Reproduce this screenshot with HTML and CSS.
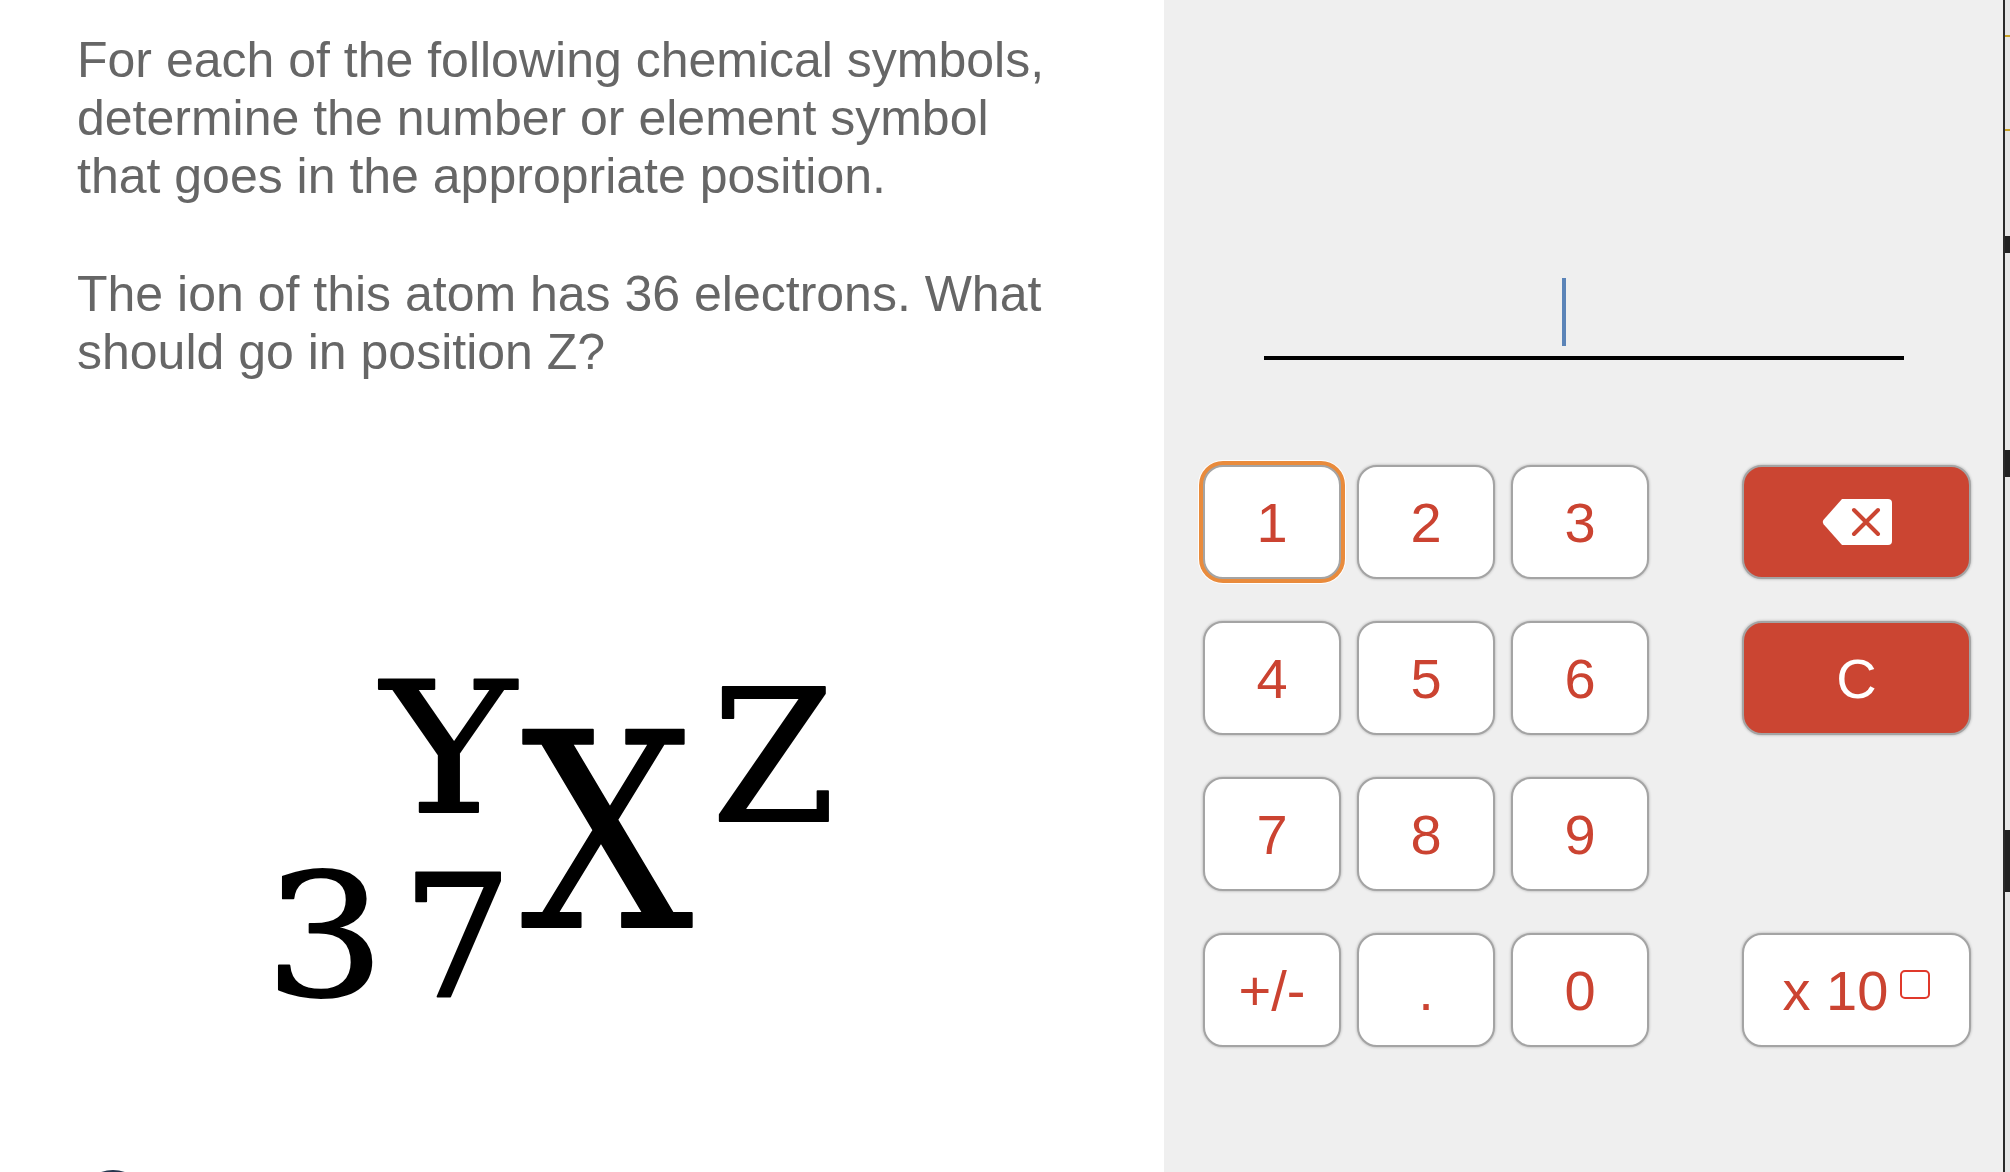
FILE: index.html
```html
<!DOCTYPE html>
<html lang="en">
<head>
<meta charset="utf-8">
<title>Chemical symbols</title>
<link rel="stylesheet" href="styles.css">
</head>
<body>
<div class="page">
  <main class="question">
    <p class="q-text">For each of the following chemical symbols, determine the number or element symbol that goes in the appropriate position.</p>
    <p class="q-text">The ion of this atom has 36 electrons. What should go in position Z?</p>
    <svg class="symbol" width="700" height="420" viewBox="0 0 700 420" aria-label="37 X with mass number Y and charge Z">
      <text class="sym" transform="translate(248.5 169) scale(1 0.89)" font-size="204" text-anchor="middle">Y</text>
      <text class="sym" transform="translate(407 284) scale(1 0.95)" font-size="285" text-anchor="middle" textLength="172" lengthAdjust="spacingAndGlyphs">X</text>
      <text class="sym" transform="translate(573.5 178) scale(0.87 0.9)" font-size="204" text-anchor="middle">Z</text>
      <text class="sym" transform="translate(125 353) scale(1 0.9)" font-size="190" text-anchor="middle">3</text>
      <text class="sym" transform="translate(257 354) scale(0.92 0.9)" font-size="190" text-anchor="middle">7</text>
    </svg>
    <div class="help-dot"></div>
  </main>
  <section class="pad">
    <div class="entry"><span class="caret"></span></div>
    <div class="keys">
      <button class="key focus">1</button>
      <button class="key">2</button>
      <button class="key">3</button>
      <button class="key red side" aria-label="backspace">
        <svg width="70" height="46" viewBox="0 0 70 46">
          <path d="M20 0 H66 Q70 0 70 4 V42 Q70 46 66 46 H20 L1.6 25.2 Q0 23 1.6 20.8 Z" fill="#fff"/>
          <path d="M32 11 L56 35 M56 11 L32 35" stroke="#cb4532" stroke-width="4" stroke-linecap="round"/>
        </svg>
      </button>
      <button class="key">4</button>
      <button class="key">5</button>
      <button class="key">6</button>
      <button class="key red side">C</button>
      <button class="key">7</button>
      <button class="key">8</button>
      <button class="key">9</button>
      <button class="key first">+/-</button>
      <button class="key">.</button>
      <button class="key">0</button>
      <button class="key side"><span>x 10</span><span class="exp"></span></button>
    </div>
  </section>
  <aside class="edge">
    <span class="mark m1"></span>
    <span class="mark m2"></span>
    <span class="mark m3"></span>
    <span class="mark m4"></span>
    <span class="mark m5"></span>
  </aside>
</div>
</body>
</html>
```
FILE: styles.css
```css
html, body {
  margin: 0;
  padding: 0;
  background: #fff;
}
body {
  width: 2010px;
  height: 1172px;
  overflow: hidden;
  font-family: "Liberation Sans", Arial, sans-serif;
}
.page {
  display: flex;
  width: 2010px;
  height: 1172px;
}
.question {
  width: 1164px;
  flex: none;
  box-sizing: border-box;
  padding: 31px 0 0 77px;
  display: flex;
  flex-direction: column;
  background: #fff;
  overflow: hidden;
}
.q-text {
  margin: 0 0 60px 0;
  width: 990px;
  font-size: 50px;
  line-height: normal;
  color: #666;
}
.q-text + .q-text {
  margin-bottom: 0;
}
.symbol {
  display: block;
  margin: 262px 0 0 123px;
  flex: none;
  overflow: visible;
}
.sym {
  font-family: "DejaVu Serif", "Liberation Serif", serif;
  fill: #000;
  stroke: #000;
  stroke-width: 2px;
  stroke-linejoin: round;
}
.help-dot {
  flex: none;
  width: 72px;
  height: 72px;
  border-radius: 50%;
  background: #26364f;
  margin-top: 107px;
}
.pad {
  width: 839px;
  flex: none;
  background: #efefef;
  display: flex;
  flex-direction: column;
}
.entry {
  margin: 278px 0 0 100px;
  width: 640px;
  height: 68px;
  padding-bottom: 10px;
  border-bottom: 4px solid #000;
  display: flex;
}
.caret {
  width: 4px;
  height: 68px;
  margin-left: 298px;
  background: #5b84b8;
}
.keys {
  margin: 105px 0 0 39px;
  display: grid;
  grid-template-columns: 138px 138px 138px 61px 229px;
  grid-auto-rows: 114px;
  column-gap: 16px;
  row-gap: 42px;
}
.key {
  box-sizing: border-box;
  margin: 0;
  padding: 0;
  border: 2px solid #a4a4a4;
  border-radius: 20px;
  background: #fff;
  box-shadow: 0 0 3px rgba(0, 0, 0, 0.3);
  color: #cb4331;
  font-family: "Liberation Sans", Arial, sans-serif;
  font-size: 56px;
  line-height: normal;
  display: flex;
  align-items: center;
  justify-content: center;
}
.key.focus {
  box-shadow: 0 0 0 4px #e98b3c, 0 0 0 5px #fff;
}
.key.red {
  background: #cb4532;
  color: #fff;
}
.side {
  grid-column: 5;
}
.first {
  grid-column: 1;
}
.exp {
  display: inline-block;
  box-sizing: border-box;
  width: 30px;
  height: 29px;
  border: 2px solid #e0392b;
  border-radius: 5px;
  margin: 35px 0 0 12px;
  align-self: flex-start;
}
.edge {
  flex: 1;
  position: relative;
  background: #e6e6e6;
  border-left: 2px solid #2a2a2a;
}
.mark {
  position: absolute;
  left: 0;
  right: 0;
  background: #222;
}
.m1 { top: 35px; height: 2px; background: #c9a227; }
.m2 { top: 129px; height: 2px; background: #c9a227; }
.m3 { top: 236px; height: 17px; }
.m4 { top: 450px; height: 27px; }
.m5 { top: 830px; height: 62px; }
```
